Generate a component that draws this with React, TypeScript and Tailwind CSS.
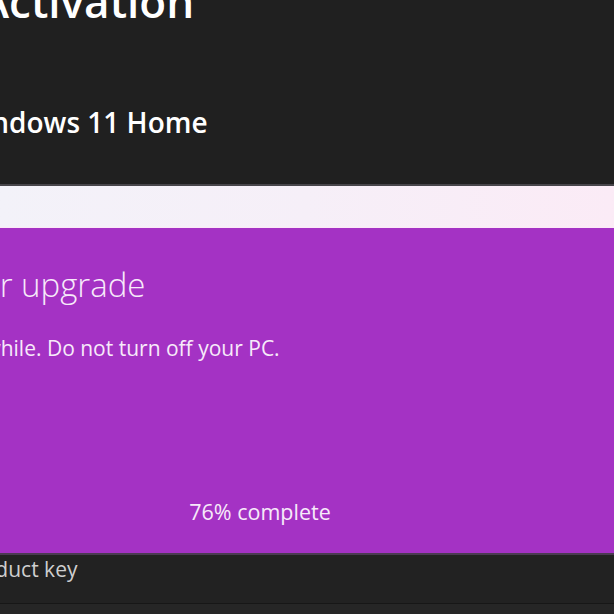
export default function App() {
  return (
    <div
      className="w-[614px] h-[614px] overflow-hidden bg-[#202020] flex flex-col"
      style={{ fontFamily: '"Open Sans", "Noto Sans", sans-serif' }}
    >
      {/* page header */}
      <div className="h-[184px] shrink-0 flex flex-col">
        <h1 className="-mt-[23px] -ml-[20px] text-[44px] leading-[48px] font-semibold text-white whitespace-nowrap">
          Activation
        </h1>
        <div className="mt-[79px] -ml-[43px] text-[28px] leading-[36px] font-semibold text-white whitespace-nowrap">
          Windows 11 Home
        </div>
      </div>
      <div className="h-[2px] shrink-0 bg-[#47454a]" />

      {/* light strip above the upgrade overlay */}
      <div className="h-[42px] shrink-0 bg-gradient-to-r from-[#f3f2f9] via-[#f6eff8] to-[#fbebf6] border-b border-[#fde8f8]" />

      {/* upgrade overlay */}
      <div className="h-[325px] shrink-0 bg-[#a432c4] flex flex-col text-[#f7eafa]">
        <div className="mt-[37px] -ml-[232px] text-[33px] leading-[40px] font-light whitespace-nowrap">
          Working on your upgrade
        </div>
        <div className="mt-[29px] -ml-[163px] text-[21px] leading-[28px] whitespace-nowrap">
          This will take a while. Do not turn off your PC.
        </div>
        <div className="mt-auto mb-[27px] w-[520px] text-center text-[21.5px] leading-[28px] whitespace-nowrap">
          76% complete
        </div>
      </div>
      <div className="h-[2px] shrink-0 bg-[#4b3a52]" />

      {/* product key row */}
      <div className="h-[48px] shrink-0 flex items-start bg-[#222222]">
        <span className="mt-0 -ml-[118px] text-[21px] leading-[28px] text-[#cfcfcf] whitespace-nowrap">
          Change product key
        </span>
      </div>
      <div className="h-px shrink-0 bg-[#171717]" />
      <div className="flex-1 bg-[#262626]" />
    </div>
  );
}
